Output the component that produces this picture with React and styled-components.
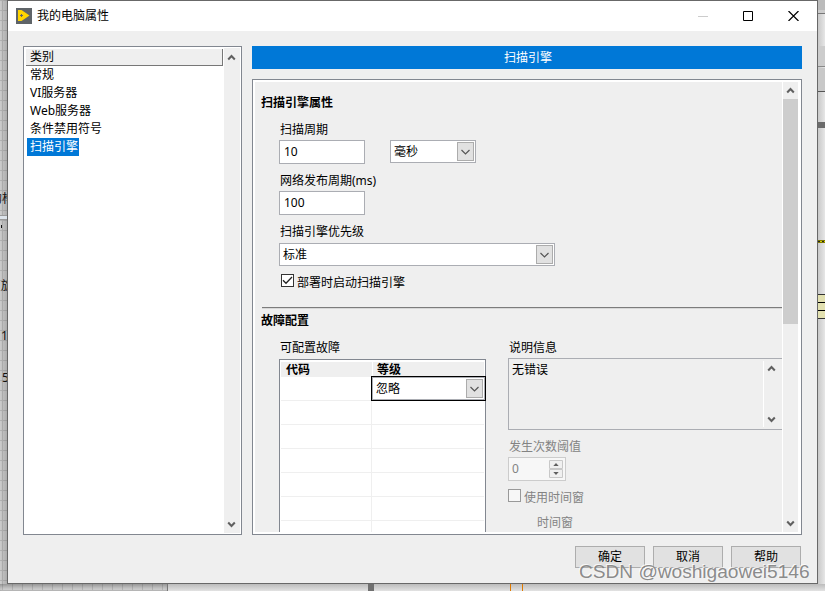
import React from "react";
import styled, { createGlobalStyle, css } from "styled-components";

const Global = createGlobalStyle`
  * { box-sizing: border-box; }
  html, body { margin: 0; padding: 0; overflow: hidden; }
  body {
    font: 12px/16px "Noto Sans", "Noto Sans CJK SC", sans-serif;
    color: #000;
  }
`;

const Desktop = styled.div`
  position: relative;
  width: 825px;
  height: 591px;
  display: grid;
  grid-template-columns: 7px 811px 7px;
  grid-template-rows: 584px 7px;
  overflow: hidden;
  background: #e6e6e6;
`;

const gridLines = css`
  background-color: #d0d0d0;
  background-image: linear-gradient(#b8b8b8 1px, transparent 1px),
    linear-gradient(90deg, #b8b8b8 1px, transparent 1px);
  background-size: 10px 10px;
`;

const LeftStrip = styled.div`
  position: relative;
  overflow: hidden;
  ${gridLines}
  background-position: 2px 0;
`;

const LeftShade = styled.div`
  position: absolute;
  inset: 0;
  background: linear-gradient(90deg, rgba(0, 0, 0, 0.02), rgba(0, 0, 0, 0.17));
`;

const RightStrip = styled.div`
  position: relative;
  background: linear-gradient(90deg, #c9c9c9, #e6e6e6);
`;

const BottomStrip = styled.div`
  grid-column: 1 / -1;
  display: flex;
  background: linear-gradient(#bcbcbc, #e2e2e2);
`;

const BottomGrid = styled.div`
  width: 168px;
  border-right: 1px solid #777;
  ${gridLines}
  background-position: 2px 6px;
  box-shadow: inset 0 5px 5px -3px rgba(0, 0, 0, 0.35);
`;

const BottomMark = styled.div`
  width: ${(p) => p.$w}px;
  margin-left: ${(p) => p.$gap}px;
  background: ${(p) => p.$color};
`;

const Mark = styled.span`
  position: absolute;
  left: ${(p) => p.$x || 0}px;
  top: ${(p) => p.$y}px;
  width: 12px;
  height: ${(p) => p.$h}px;
  background: ${(p) => p.$bg || "transparent"};
  white-space: nowrap;
  color: #111;
`;

const Window = styled.main`
  display: flex;
  flex-direction: column;
  background: #efefef;
  border: 1px solid #686868;
`;

const TitleBar = styled.header`
  height: 30px;
  flex: none;
  display: flex;
  align-items: center;
  background: #fff;
  padding-left: 8px;
  padding-right: 1px;
  svg { display: block; }
`;

const Title = styled.h1`
  flex: 1;
  margin: 0 0 0 5px;
  font-size: 12px;
  font-weight: 400;
`;

const WindowControl = styled.div`
  width: ${(p) => p.$w || 46}px;
  display: flex;
  justify-content: center;
`;

const Body = styled.div`
  display: flex;
  padding: 15px 15px 0;
  height: 504px;
  gap: 10px;
`;

const CategoryList = styled.nav`
  width: 219px;
  border: 1px solid #828790;
  background: #fff;
  display: flex;
  padding: 1px;
`;

const CategoryItems = styled.div`
  width: 199px;
  padding: 1px 2px 0 1px;
`;

const CategoryHeader = styled.div`
  width: 197px;
  height: 17px;
  padding-left: 4px;
  background: #efefef;
  border-right: 1px solid #777;
  border-bottom: 1px solid #777;
`;

const Category = styled.div`
  width: max-content;
  height: 18px;
  margin-left: 1px;
  padding: 0 1px 0 3px;
  line-height: 18px;
  ${(p) => p.$selected && "background: #0078d7; color: #fff;"}
`;

const ScrollTrack = styled.div`
  width: ${(p) => p.$w}px;
  flex: none;
  display: flex;
  flex-direction: column;
  align-items: center;
  background: #efefef;
  padding: ${(p) => p.$pad};
  margin: ${(p) => p.$margin || 0};
  border-left: ${(p) => (p.$line ? "1px solid #fff" : "none")};
  svg { display: block; flex: none; }
`;

const ScrollThumb = styled.div`
  width: 15px;
  height: 225px;
  margin-top: 5px;
  background: #cdcdcd;
`;

const Spacer = styled.div`
  flex: 1;
`;

const Main = styled.section`
  width: 550px;
  display: flex;
  flex-direction: column;
  gap: 10px;
`;

const Banner = styled.h2`
  margin: 0;
  height: 23px;
  padding-left: 2px;
  line-height: 23px;
  text-align: center;
  font-size: 12px;
  font-weight: 400;
  color: #fff;
  background: #0078d7;
`;

const Panel = styled.div`
  height: 456px;
  border: 1px solid #828790;
  background: #fff;
  padding: 2px 3px 2px 2px;
  display: flex;
`;

const PanelContent = styled.div`
  width: 527px;
  overflow: hidden;
  background: #efefef;
  padding: 13px 0 0 6px;
`;

const SectionTitle = styled.h3`
  margin: 0;
  height: 16px;
  font-size: 12px;
  font-weight: 600;
`;

const Label = styled.div`
  height: 16px;
  margin-top: ${(p) => p.$top || 0}px;
  margin-bottom: ${(p) => p.$bottom || 0}px;
  padding-left: 1px;
  color: ${(p) => (p.$muted ? "#838383" : "#000")};
`;

const Fields = styled.div`
  padding: 11px 0 0 18px;
`;

const FieldRow = styled.div`
  display: flex;
  gap: 25px;
  align-items: flex-start;
`;

const TextInput = styled.div`
  width: 86px;
  height: 24px;
  padding-left: 4px;
  line-height: 22px;
  background: #fff;
  border: 1px solid #abadb3;
`;

const SelectBox = styled.div`
  width: ${(p) => p.$w}px;
  height: ${(p) => p.$h || 23}px;
  padding: 1px 1px 1px 3px;
  display: flex;
  align-items: center;
  justify-content: space-between;
  background: #fff;
  border: 1px solid #abadb3;
`;

const DropButton = styled.span`
  width: 17px;
  height: 19px;
  display: flex;
  align-items: center;
  justify-content: center;
  background: #e1e1e1;
  border: 1px solid #acacac;
`;

const CheckRow = styled.div`
  display: flex;
  height: 16px;
  gap: 3px;
  margin-top: ${(p) => p.$top}px;
  margin-left: ${(p) => p.$left || 0}px;
  color: ${(p) => (p.$muted ? "#838383" : "#000")};
  span { margin-top: 1px; }
`;

const CheckBox = styled.div`
  width: 13px;
  height: 13px;
  background: ${(p) => (p.$muted ? "#f7f7f7" : "#fff")};
  border: 1px solid ${(p) => (p.$muted ? "#999" : "#333")};
  svg { display: block; }
`;

const Rule = styled.hr`
  height: 2px;
  margin: 17px 0 4px 1px;
  border: 0;
  border-top: 1px solid #7c7c7c;
  border-bottom: 1px solid #d8d8d8;
`;

const FaultColumns = styled.div`
  display: flex;
  gap: 22px;
  padding: 11px 0 0 18px;
`;

const FaultTable = styled.div`
  width: 207px;
  height: 190px;
  border: 1px solid #828790;
  background: #fff;
  padding: 2px 1px 0;
`;

const HeaderRow = styled.div`
  height: 15px;
  display: grid;
  grid-template-columns: 91px 112px;
  background: #efefef;
  font-weight: 600;
  line-height: 15px;
  span { padding-left: 5px; }
  span + span { border-left: 1px solid #fff; padding-left: 4px; }
`;

const TableRow = styled.div`
  height: 24px;
  display: grid;
  grid-template-columns: 90px 113px;
  border-bottom: 1px solid #efefef;
`;

const TableCell = styled.div`
  border-left: ${(p) => (p.$divided ? "1px solid #efefef" : "none")};
`;

const ActiveCell = styled.div`
  width: 115px;
  height: 25px;
  margin-top: -1px;
  border: 1px solid #000;
  z-index: 1;
`;

const Details = styled.div`
  width: 274px;
  flex: none;
`;

const Description = styled.div`
  height: 72px;
  border: 1px solid #abadb3;
  border-right: 0;
  display: flex;
  justify-content: space-between;
  padding-left: 3px;
  p { margin: 3px 0 0; }
`;

const Spinner = styled.div`
  width: 58px;
  height: 24px;
  display: flex;
  align-items: center;
  justify-content: space-between;
  padding: 0 2px 0 3px;
  background: #f7f7f7;
  border: 1px solid #ccc;
  color: #838383;
  svg { display: block; }
`;

const Footer = styled.footer`
  display: flex;
  justify-content: flex-end;
  gap: 8px;
  padding: 11px 16px 0 0;
`;

const Button = styled.button`
  width: 70px;
  height: 22px;
  padding: 0;
  font: inherit;
  line-height: 18px;
  color: #000;
  background: #e1e1e1;
  border: 1px solid #adadad;
  border-radius: 0;
`;

const Watermark = styled.div`
  position: absolute;
  left: 579px;
  top: 559px;
  font: 19.1px/26px "Liberation Sans", sans-serif;
  color: rgba(125, 125, 125, 0.9);
  text-shadow: -1px -1px 0 rgba(255, 255, 255, 0.75);
  white-space: nowrap;
`;

const ScrollArrow = ({ down }) => (
  <svg width="9" height="7" viewBox="0 0 9 7">
    <path
      d={down ? "M1.2 1.6 4.5 4.9 7.8 1.6" : "M1.2 5.4 4.5 2.1 7.8 5.4"}
      fill="none"
      stroke="#606060"
      strokeWidth="2.1"
    />
  </svg>
);

const Select = ({ value, width, height }) => (
  <SelectBox $w={width} $h={height}>
    {value}
    <DropButton>
      <svg width="9" height="6" viewBox="0 0 9 6">
        <path d="M.5 1 4.5 5 8.5 1" fill="none" stroke="#555" strokeWidth="1.2" />
      </svg>
    </DropButton>
  </SelectBox>
);

const AppIcon = () => (
  <svg width="16" height="16" viewBox="0 0 16 16">
    <rect width="16" height="16" fill="#5f6468" />
    <path d="M2 2h3.5L13.5 7.5 5.5 13H2z" fill="#ffd500" />
    <path d="M4 7.5h3M5.5 6v3" stroke="#5f6468" />
  </svg>
);

const categories = ["常规", "VI服务器", "Web服务器", "条件禁用符号", "扫描引擎"];

export default function App() {
  return (
    <Desktop>
      <Global />
      <LeftStrip>
        <LeftShade />
        <Mark $x={-10} $y={191} $h={16}>的构</Mark>
        <Mark $y={215} $h={5} $bg="linear-gradient(#999 1px,#dce3ea 1px,#dce3ea 4px,#999 4px)" />
        <Mark $x={1} $y={225} $h={3} $bg="linear-gradient(90deg,#111 1px,transparent 1px)" />
        <Mark $x={1} $y={278} $h={16}>旋</Mark>
        <Mark $x={1} $y={328} $h={16}>1</Mark>
        <Mark $x={2} $y={370} $h={16}>5</Mark>
      </LeftStrip>
      <Window>
        <TitleBar>
          <AppIcon />
          <Title>我的电脑属性</Title>
          <WindowControl>
            <svg width="10" height="10"><path d="M0 5.5h10" stroke="#ccc" /></svg>
          </WindowControl>
          <WindowControl $w={44}>
            <svg width="10" height="10"><path d="M.5.5h9v9h-9z" fill="none" stroke="#000" /></svg>
          </WindowControl>
          <WindowControl $w={46}>
            <svg width="11" height="10"><path d="M.5 0l10 10M10.5 0l-10 10" stroke="#000" strokeWidth="1.2" /></svg>
          </WindowControl>
        </TitleBar>
        <Body>
          <CategoryList>
            <CategoryItems>
              <CategoryHeader>类别</CategoryHeader>
              {categories.map((name) => (
                <Category key={name} $selected={name === "扫描引擎"}>{name}</Category>
              ))}
            </CategoryItems>
            <ScrollTrack $w={16} $pad="6px 1px 5px 0">
              <ScrollArrow />
              <Spacer />
              <ScrollArrow down />
            </ScrollTrack>
          </CategoryList>
          <Main>
            <Banner>扫描引擎</Banner>
            <Panel>
              <PanelContent>
                <SectionTitle>扫描引擎属性</SectionTitle>
                <Fields>
                  <Label $bottom={2}>扫描周期</Label>
                  <FieldRow>
                    <TextInput>10</TextInput>
                    <Select value="毫秒" width={86} />
                  </FieldRow>
                  <Label $top={9} $bottom={2}>网络发布周期(ms)</Label>
                  <TextInput>100</TextInput>
                  <Label $top={9} $bottom={3}>扫描引擎优先级</Label>
                  <Select value="标准" width={276} />
                  <CheckRow $top={8} $left={2}>
                    <CheckBox>
                      <svg width="11" height="11" viewBox="0 0 11 11">
                        <path d="M1 5.3 4 8.3 10 2" fill="none" stroke="#222" strokeWidth="1.3" />
                      </svg>
                    </CheckBox>
                    <span>部署时启动扫描引擎</span>
                  </CheckRow>
                </Fields>
                <Rule />
                <SectionTitle>故障配置</SectionTitle>
                <FaultColumns>
                  <div>
                    <Label $bottom={3}>可配置故障</Label>
                    <FaultTable>
                      <HeaderRow><span>代码</span><span>等级</span></HeaderRow>
                      <TableRow>
                        <TableCell />
                        <ActiveCell><Select value="忽略" width={113} height={23} /></ActiveCell>
                      </TableRow>
                      {[1, 2, 3, 4, 5, 6].map((row) => (
                        <TableRow key={row}><TableCell /><TableCell $divided /></TableRow>
                      ))}
                    </FaultTable>
                  </div>
                  <Details>
                    <Label $bottom={2}>说明信息</Label>
                    <Description>
                      <p>无错误</p>
                      <ScrollTrack $w={19} $line $pad="4px 3px 4px 0" $margin="2px 0">
                        <ScrollArrow />
                        <Spacer />
                        <ScrollArrow down />
                      </ScrollTrack>
                    </Description>
                    <Label $muted $top={9} $bottom={2}>发生次数阈值</Label>
                    <Spinner>
                      0
                      <svg width="14" height="20" viewBox="0 0 14 20">
                        <path d="M.5 1.5h13v8H.5zM.5 10.5h13v8H.5z" fill="#f0f0f0" stroke="#c8c8c8" />
                        <path d="M7 4 9.7 7H4.3zM7 16l2.7-3H4.3z" fill="#606060" />
                      </svg>
                    </Spinner>
                    <CheckRow $muted $top={8}>
                      <CheckBox $muted />
                      <span>使用时间窗</span>
                    </CheckRow>
                    <CheckRow $muted $top={9} $left={29}><span>时间窗</span></CheckRow>
                  </Details>
                </FaultColumns>
              </PanelContent>
              <ScrollTrack $w={16} $line $pad="5px 0 5px">
                <ScrollArrow />
                <ScrollThumb />
                <Spacer />
                <ScrollArrow down />
              </ScrollTrack>
            </Panel>
          </Main>
        </Body>
        <Footer>
          <Button>确定</Button>
          <Button>取消</Button>
          <Button>帮助</Button>
        </Footer>
      </Window>
      <RightStrip>
        <Mark $y={0} $h={14} $bg="linear-gradient(#bbb 10px,#ccc 10px,#ccc 13px,#777 13px)" />
        <Mark $y={46} $h={21} $bg="linear-gradient(#ccc 20px,#888 20px)" />
        <Mark $y={68} $h={24} $bg="linear-gradient(#c8c8c8 23px,#555 23px)" />
        <Mark $y={122} $h={6} $bg="#6b6b6b" />
        <Mark $y={240} $h={3} $bg="linear-gradient(#807a00 1px,transparent 1px 2px,#807a00 2px),repeating-linear-gradient(90deg,#222 0 2px,#d8d000 2px 4px)" />
        <Mark $y={294} $h={25} $bg="linear-gradient(#333 1px,#e2e0b0 1px 8px,#000 8px 9px,#e2e0b0 9px 16px,#000 16px 17px,#e2e0b0 17px 24px,#333 24px)" />
      </RightStrip>
      <BottomStrip>
        <BottomGrid />
        <BottomMark $gap={200} $w={6} $color="#707070" />
        <BottomMark $gap={136} $w={1} $color="#df7900" />
        <BottomMark $gap={11} $w={1} $color="#df7900" />
      </BottomStrip>
      <Watermark>CSDN @woshigaowei5146</Watermark>
    </Desktop>
  );
}
